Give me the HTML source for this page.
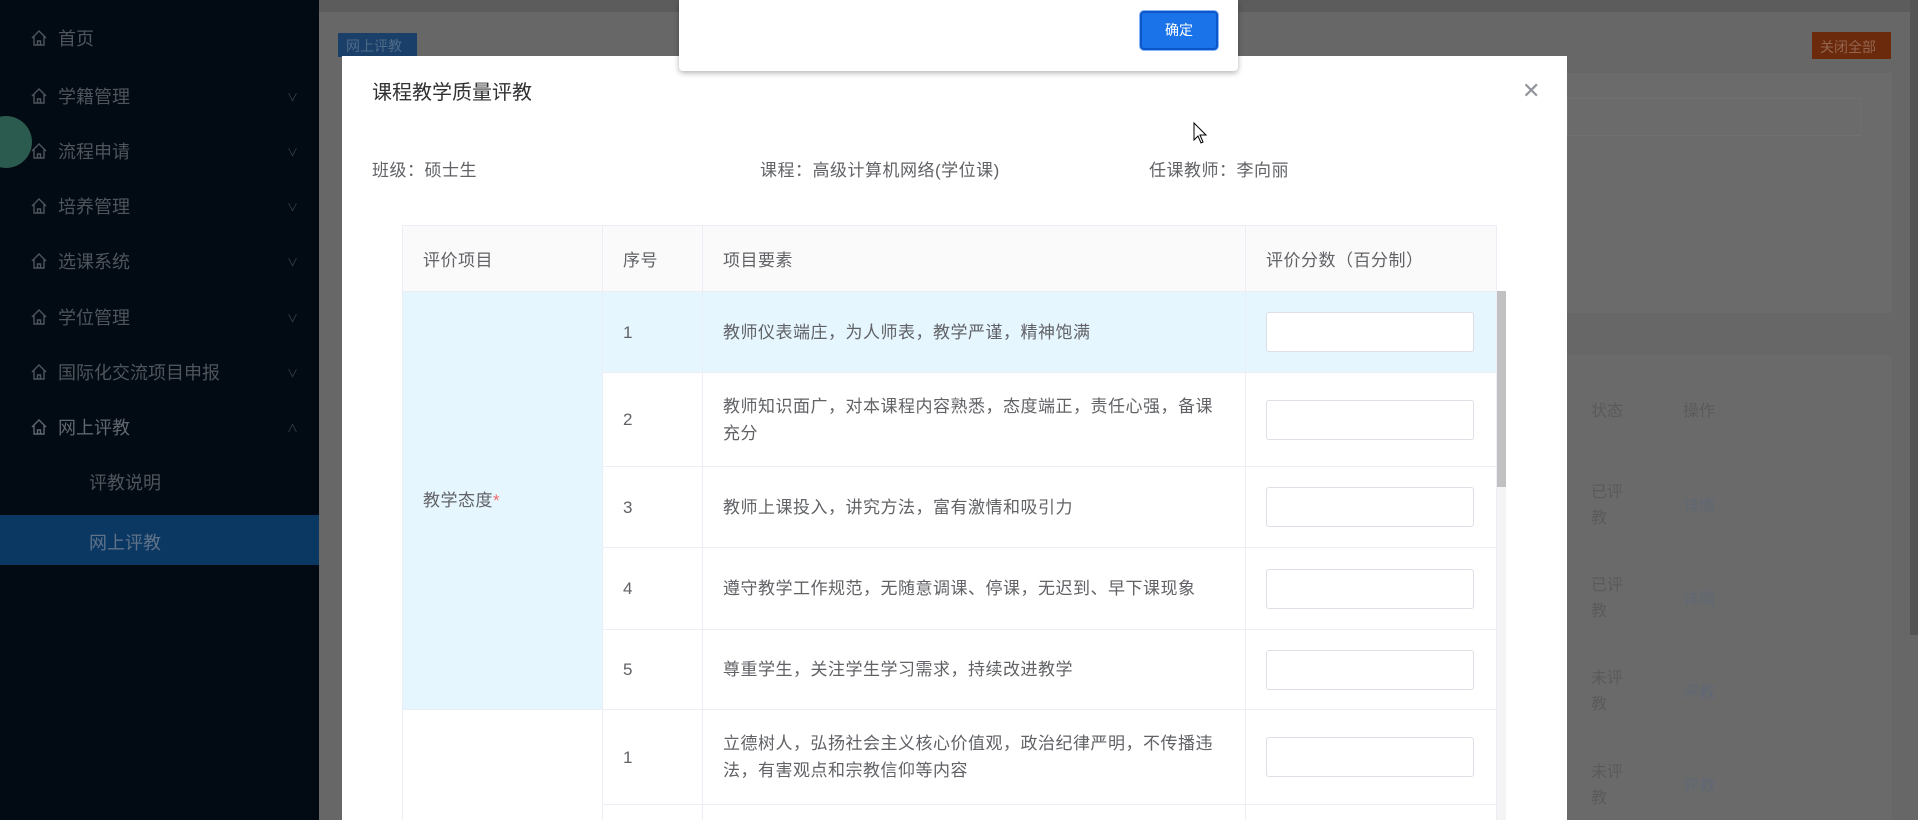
<!DOCTYPE html><html><head><meta charset="utf-8"><style>
*{margin:0;padding:0;box-sizing:border-box}
body{width:1918px;height:820px;overflow:hidden;position:relative;background:#676767;font-family:"Liberation Sans","Noto Sans CJK SC",sans-serif;color:#606266}
.a{position:absolute}
.side{left:0;top:0;width:319px;height:820px;background:#020a14}
.mi{position:absolute;left:30px;font-size:18px;color:#50555c;display:flex;align-items:center}
.mi svg{margin-right:10px}
.chev{position:absolute;left:287px;color:#3c4148;font-size:11px}
table{border-collapse:collapse;table-layout:fixed}
td{border:1px solid #ebeef5;font-size:17px;letter-spacing:.5px;color:#606266;padding:0 20px;vertical-align:middle;line-height:27px}
th{border:1px solid #ebeef5;background:#fafafa;font-weight:normal;text-align:left;font-size:17px;letter-spacing:.5px;color:#606266;padding:0 20px}
.inp{width:208px;height:40px;border:1px solid #dcdfe6;background:#fff;border-radius:3px}
.hl td{background:#e6f6fe}
</style></head><body>
<div class="a side">
<div class="a" style="left:-20px;top:116px;width:52px;height:52px;border-radius:50%;background:#2b5a4e"></div>
<div class="mi" style="top:25px"><svg width="18" height="18" viewBox="0 0 18 18" fill="none" stroke="#50555c" stroke-width="1.4"><path d="M2 9L9 2l7 7M4 7.5V16h10V7.5M7.5 16v-4h3v4"/></svg>首页</div>
<div class="mi" style="top:83px"><svg width="18" height="18" viewBox="0 0 18 18" fill="none" stroke="#50555c" stroke-width="1.4"><path d="M2 9L9 2l7 7M4 7.5V16h10V7.5M7.5 16v-4h3v4"/></svg>学籍管理</div><div class="chev" style="top:89px">∨</div>
<div class="mi" style="top:138px"><svg width="18" height="18" viewBox="0 0 18 18" fill="none" stroke="#50555c" stroke-width="1.4"><path d="M2 9L9 2l7 7M4 7.5V16h10V7.5M7.5 16v-4h3v4"/></svg>流程申请</div><div class="chev" style="top:144px">∨</div>
<div class="mi" style="top:193px"><svg width="18" height="18" viewBox="0 0 18 18" fill="none" stroke="#50555c" stroke-width="1.4"><path d="M2 9L9 2l7 7M4 7.5V16h10V7.5M7.5 16v-4h3v4"/></svg>培养管理</div><div class="chev" style="top:199px">∨</div>
<div class="mi" style="top:248px"><svg width="18" height="18" viewBox="0 0 18 18" fill="none" stroke="#50555c" stroke-width="1.4"><path d="M2 9L9 2l7 7M4 7.5V16h10V7.5M7.5 16v-4h3v4"/></svg>选课系统</div><div class="chev" style="top:254px">∨</div>
<div class="mi" style="top:304px"><svg width="18" height="18" viewBox="0 0 18 18" fill="none" stroke="#50555c" stroke-width="1.4"><path d="M2 9L9 2l7 7M4 7.5V16h10V7.5M7.5 16v-4h3v4"/></svg>学位管理</div><div class="chev" style="top:310px">∨</div>
<div class="mi" style="top:359px"><svg width="18" height="18" viewBox="0 0 18 18" fill="none" stroke="#50555c" stroke-width="1.4"><path d="M2 9L9 2l7 7M4 7.5V16h10V7.5M7.5 16v-4h3v4"/></svg>国际化交流项目申报</div><div class="chev" style="top:365px">∨</div>
<div class="mi" style="top:414px;color:#62676e"><svg width="18" height="18" viewBox="0 0 18 18" fill="none" stroke="#62676e" stroke-width="1.4"><path d="M2 9L9 2l7 7M4 7.5V16h10V7.5M7.5 16v-4h3v4"/></svg>网上评教</div><div class="chev" style="top:420px">∧</div>
<div class="mi" style="left:89px;top:469px">评教说明</div>
<div class="a" style="left:0;top:515px;width:319px;height:50px;background:#0b3763"></div>
<div class="mi" style="left:89px;top:529px;color:#5f7288">网上评教</div>
</div>
<div class="a" style="left:319px;top:0;width:1599px;height:12px;background:#5c5c5c"></div>
<div class="a" style="left:338px;top:33px;width:79px;height:24px;background:#1a3f68;color:#4f6b88;font-size:14px;padding:3px 8px">网上评教</div>
<div class="a" style="left:1812px;top:32px;width:79px;height:27px;background:#6b2a0c;color:#936450;font-size:14px;padding:5px 8px">关闭全部</div>
<div class="a" style="left:1567px;top:73px;width:325px;height:240px;background:#6b6b6b"></div>
<div class="a" style="left:1567px;top:98px;width:294px;height:38px;border:1px solid #707070"></div>
<div class="a" style="left:1567px;top:355px;width:325px;height:465px;background:#6a6a6a"></div>
<div class="a" style="left:1591px;top:397px;font-size:16px;color:#5a5a5a">状态</div><div class="a" style="left:1683px;top:397px;font-size:16px;color:#5a5a5a">操作</div>
<div class="a" style="left:1591px;top:480px;font-size:16px;color:#5a5a5a;width:34px;line-height:26px">已评教</div><div class="a" style="left:1683px;top:492px;font-size:16px;color:#5f6874">详情</div>
<div class="a" style="left:1591px;top:573px;font-size:16px;color:#5a5a5a;width:34px;line-height:26px">已评教</div><div class="a" style="left:1683px;top:585px;font-size:16px;color:#5f6874">详情</div>
<div class="a" style="left:1591px;top:666px;font-size:16px;color:#5a5a5a;width:34px;line-height:26px">未评教</div><div class="a" style="left:1683px;top:678px;font-size:16px;color:#5f6874">评教</div>
<div class="a" style="left:1591px;top:760px;font-size:16px;color:#5a5a5a;width:34px;line-height:26px">未评教</div><div class="a" style="left:1683px;top:772px;font-size:16px;color:#5f6874">评教</div>
<div class="a" style="left:1910px;top:0;width:8px;height:635px;background:#555"></div>

<div class="a" style="left:342px;top:56px;width:1225px;height:764px;background:#fff;overflow:hidden">
<div class="a" style="left:30px;top:20px;font-size:20px;color:#303133">课程教学质量评教</div>
<div class="a" style="left:1180px;top:22px;font-size:22px;color:#909399">✕</div>
<div class="a" style="left:30px;top:100px;font-size:17px;letter-spacing:.5px">班级：硕士生</div>
<div class="a" style="left:418px;top:100px;font-size:17px;letter-spacing:.5px">课程：高级计算机网络(学位课)</div>
<div class="a" style="left:807px;top:100px;font-size:17px;letter-spacing:.5px">任课教师：李向丽</div>
<table class="a" style="left:60px;top:169px;width:1094px">
<colgroup><col style="width:200px"><col style="width:100px"><col style="width:543px"><col style="width:251px"></colgroup>
<tr style="height:66px"><th>评价项目</th><th>序号</th><th>项目要素</th><th>评价分数（百分制）</th></tr>
<tr class="hl" style="height:81px"><td rowspan="5" style="background:#e6f6fe">教学态度<span style="color:#f56c6c">*</span></td><td>1</td><td>教师仪表端庄，为人师表，教学严谨，精神饱满</td><td><div class="inp"></div></td></tr>
<tr style="height:94px"><td>2</td><td>教师知识面广，对本课程内容熟悉，态度端正，责任心强，备课充分</td><td><div class="inp"></div></td></tr>
<tr style="height:81px"><td>3</td><td>教师上课投入，讲究方法，富有激情和吸引力</td><td><div class="inp"></div></td></tr>
<tr style="height:82px"><td>4</td><td>遵守教学工作规范，无随意调课、停课，无迟到、早下课现象</td><td><div class="inp"></div></td></tr>
<tr style="height:80px"><td>5</td><td>尊重学生，关注学生学习需求，持续改进教学</td><td><div class="inp"></div></td></tr>
<tr style="height:95px"><td rowspan="2"></td><td>1</td><td>立德树人，弘扬社会主义核心价值观，政治纪律严明，不传播违法，有害观点和宗教信仰等内容</td><td><div class="inp"></div></td></tr>
<tr style="height:80px"><td></td><td></td><td></td></tr>
</table>
<div class="a" style="left:1155px;top:235px;width:9px;height:529px;background:#f4f4f4"></div>
<div class="a" style="left:1155px;top:235px;width:9px;height:196px;background:#c1c1c1"></div>
</div>

<div class="a" style="left:679px;top:0;width:559px;height:71px;background:#fff;border-radius:0 0 4px 4px;box-shadow:0 2px 6px rgba(0,0,0,.3)"></div>
<div class="a" style="left:1140px;top:11px;width:78px;height:39px;background:#1a73e8;border:2px solid #0b57c9;border-radius:4px;color:#fff;font-size:14px;text-align:center;line-height:35px;box-shadow:0 0 0 1px #8ab4f8">确定</div>
<svg class="a" style="left:1193px;top:122px" width="14" height="22" viewBox="0 0 14 22"><path d="M1 1v17l4-4 3 7 2-1-3-7h6z" fill="#fff" stroke="#000" stroke-width="1"/></svg>
</body></html>
